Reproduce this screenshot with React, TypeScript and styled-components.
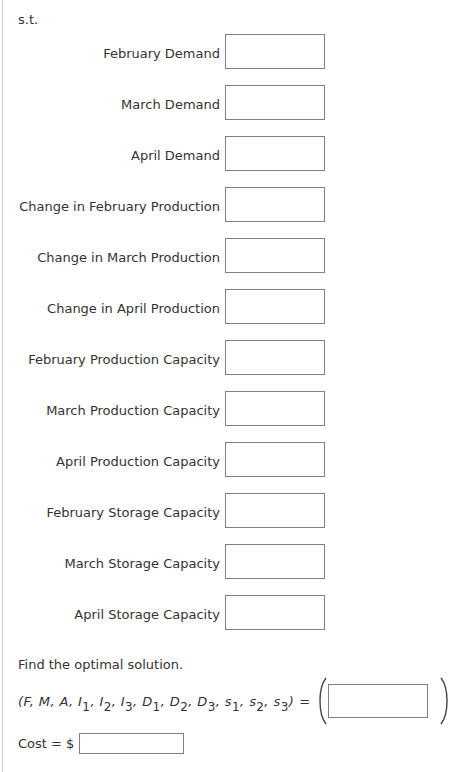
import React from 'react';
import styled, { createGlobalStyle } from 'styled-components';

const GlobalStyle = createGlobalStyle`
  html, body {
    margin: 0;
    padding: 0;
    background: #fff;
  }
  body {
    font-family: Verdana, "DejaVu Sans", sans-serif;
    font-size: 13px;
    color: #333;
  }
`;

const Page = styled.div`
  margin-left: 2px;
  min-height: 772px;
  border-left: 1px solid #cfcfcf;
  padding: 12px 0 0 15px;
  box-sizing: border-box;
`;

const Heading = styled.div`
  line-height: 16px;
`;

const ConstraintGrid = styled.div`
  display: grid;
  grid-template-columns: 202px 100px;
  column-gap: 5px;
  row-gap: 16px;
  margin-top: 6px;
  align-items: center;
`;

const Label = styled.label`
  text-align: right;
  white-space: nowrap;
  padding-top: 3px;
`;

const Box = styled.input<{ $w?: number; $h?: number }>`
  width: ${(p) => p.$w ?? 100}px;
  height: ${(p) => p.$h ?? 35}px;
  box-sizing: border-box;
  border: 1px solid #808080;
  background: #fff;
  padding: 0 4px;
  margin: 0;
  font: inherit;
  outline: none;
`;

const Prompt = styled.div`
  margin-top: 27px;
  line-height: 16px;
`;

const TupleRow = styled.div`
  display: flex;
  align-items: center;
  margin-top: 3px;
  height: 50px;
`;

const Tuple = styled.span`
  white-space: nowrap;
  font-style: italic;
  letter-spacing: 0.4px;
  sub {
    font-size: 12px;
    font-style: normal;
    vertical-align: -5px;
    line-height: 0;
  }
`;

const Equals = styled.span`
  margin: 0 6px 0 5px;
`;

const Paren = styled.svg`
  flex: none;
  display: block;
`;

const CostRow = styled.div`
  display: flex;
  align-items: center;
  gap: 5px;
  margin-top: 7px;
`;

const constraints = [
  'February Demand',
  'March Demand',
  'April Demand',
  'Change in February Production',
  'Change in March Production',
  'Change in April Production',
  'February Production Capacity',
  'March Production Capacity',
  'April Production Capacity',
  'February Storage Capacity',
  'March Storage Capacity',
  'April Storage Capacity',
];

const vars: [string, string?][] = [
  ['F'], ['M'], ['A'],
  ['I', '1'], ['I', '2'], ['I', '3'],
  ['D', '1'], ['D', '2'], ['D', '3'],
  ['s', '1'], ['s', '2'], ['s', '3'],
];

const LeftParen = () => (
  <Paren width="12" height="50" viewBox="0 0 12 50">
    <path d="M10 2 C 2 12, 2 38, 10 48" fill="none" stroke="#444" strokeWidth="1.4" />
  </Paren>
);

const RightParen = () => (
  <Paren width="12" height="50" viewBox="0 0 12 50">
    <path d="M2 2 C 10 12, 10 38, 2 48" fill="none" stroke="#444" strokeWidth="1.4" />
  </Paren>
);

export default function App() {
  return (
    <>
      <GlobalStyle />
      <Page>
        <Heading>s.t.</Heading>
        <ConstraintGrid>
          {constraints.map((c) => (
            <React.Fragment key={c}>
              <Label>{c}</Label>
              <Box type="text" />
            </React.Fragment>
          ))}
        </ConstraintGrid>

        <Prompt>Find the optimal solution.</Prompt>

        <TupleRow>
          <Tuple>
            (
            {vars.map(([v, s], i) => (
              <React.Fragment key={i}>
                {v}
                {s && <sub>{s}</sub>}
                {i < vars.length - 1 ? ', ' : ''}
              </React.Fragment>
            ))}
            )
          </Tuple>
          <Equals>=</Equals>
          <LeftParen />
          <Box type="text" $h={34} />
          <span style={{ width: 11 }} />
          <RightParen />
        </TupleRow>

        <CostRow>
          <span>Cost = $</span>
          <Box type="text" $w={105} $h={21} />
        </CostRow>
      </Page>
    </>
  );
}
